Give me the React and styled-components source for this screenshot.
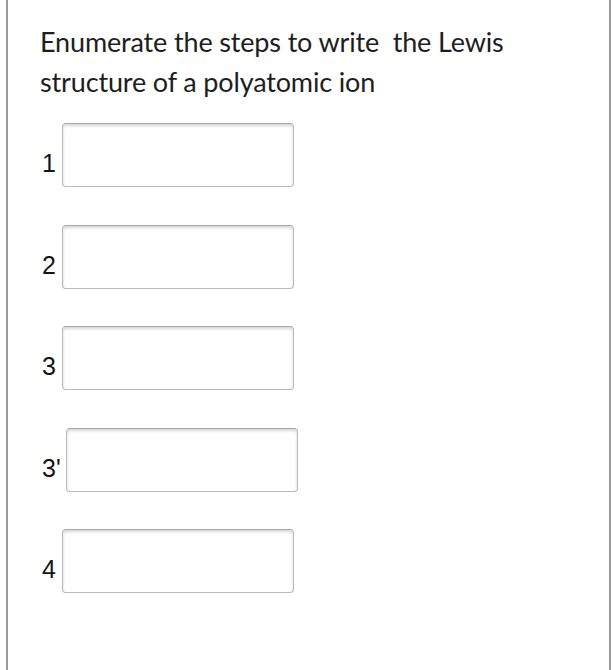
import React from 'react';
import styled, { createGlobalStyle } from 'styled-components';

const GlobalStyle = createGlobalStyle`
  html, body {
    margin: 0;
    padding: 0;
    background: #ffffff;
  }
`;

const Frame = styled.div`
  box-sizing: border-box;
  margin-left: 6px;
  width: 605px;
  height: 670px;
  border-left: 2px solid #9a9a9a;
  border-right: 2px solid #9a9a9a;
  padding: 22px 0 0 32px;
  overflow: hidden;
`;

const Question = styled.p`
  margin: 0;
  font-family: Lato, "Liberation Sans", sans-serif;
  font-size: 27px;
  letter-spacing: -0.15px;
  line-height: 40px;
  color: #1e1e1e;
  white-space: pre-wrap;
`;

const Steps = styled.div`
  display: flex;
  flex-direction: column;
  gap: 37.5px;
  margin-top: 21px;
  padding-left: 2px;
`;

const Step = styled.div`
  display: flex;
  align-items: flex-start;
  gap: ${(p) => p.$gap}px;
`;

const StepLabel = styled.span`
  margin-top: 28px;
  font-family: "Liberation Sans", Arial, sans-serif;
  font-size: 25px;
  line-height: 24px;
  color: #151515;
`;

const Answer = styled.input`
  box-sizing: border-box;
  width: 232px;
  height: 64px;
  margin: 0;
  padding: 0 8px;
  border: 1px solid #b9b9b9;
  border-top-color: #a8a8a8;
  border-radius: 4px;
  background: #ffffff;
  box-shadow: inset 0 2px 3px rgba(0, 0, 0, 0.16);
  font-family: "Liberation Sans", Arial, sans-serif;
  font-size: 18px;
  outline: none;
`;

const steps = [
  { label: '1', gap: 6 },
  { label: '2', gap: 6 },
  { label: '3', gap: 6 },
  { label: "3'", gap: 5 },
  { label: '4', gap: 6 },
];

export default function App() {
  return (
    <>
      <GlobalStyle />
      <Frame>
        <Question>
          {'Enumerate the steps to write  the Lewis\nstructure of a polyatomic ion'}
        </Question>
        <Steps>
          {steps.map((s) => (
            <Step key={s.label} $gap={s.gap}>
              <StepLabel>{s.label}</StepLabel>
              <Answer type="text" aria-label={`Step ${s.label}`} />
            </Step>
          ))}
        </Steps>
      </Frame>
    </>
  );
}
